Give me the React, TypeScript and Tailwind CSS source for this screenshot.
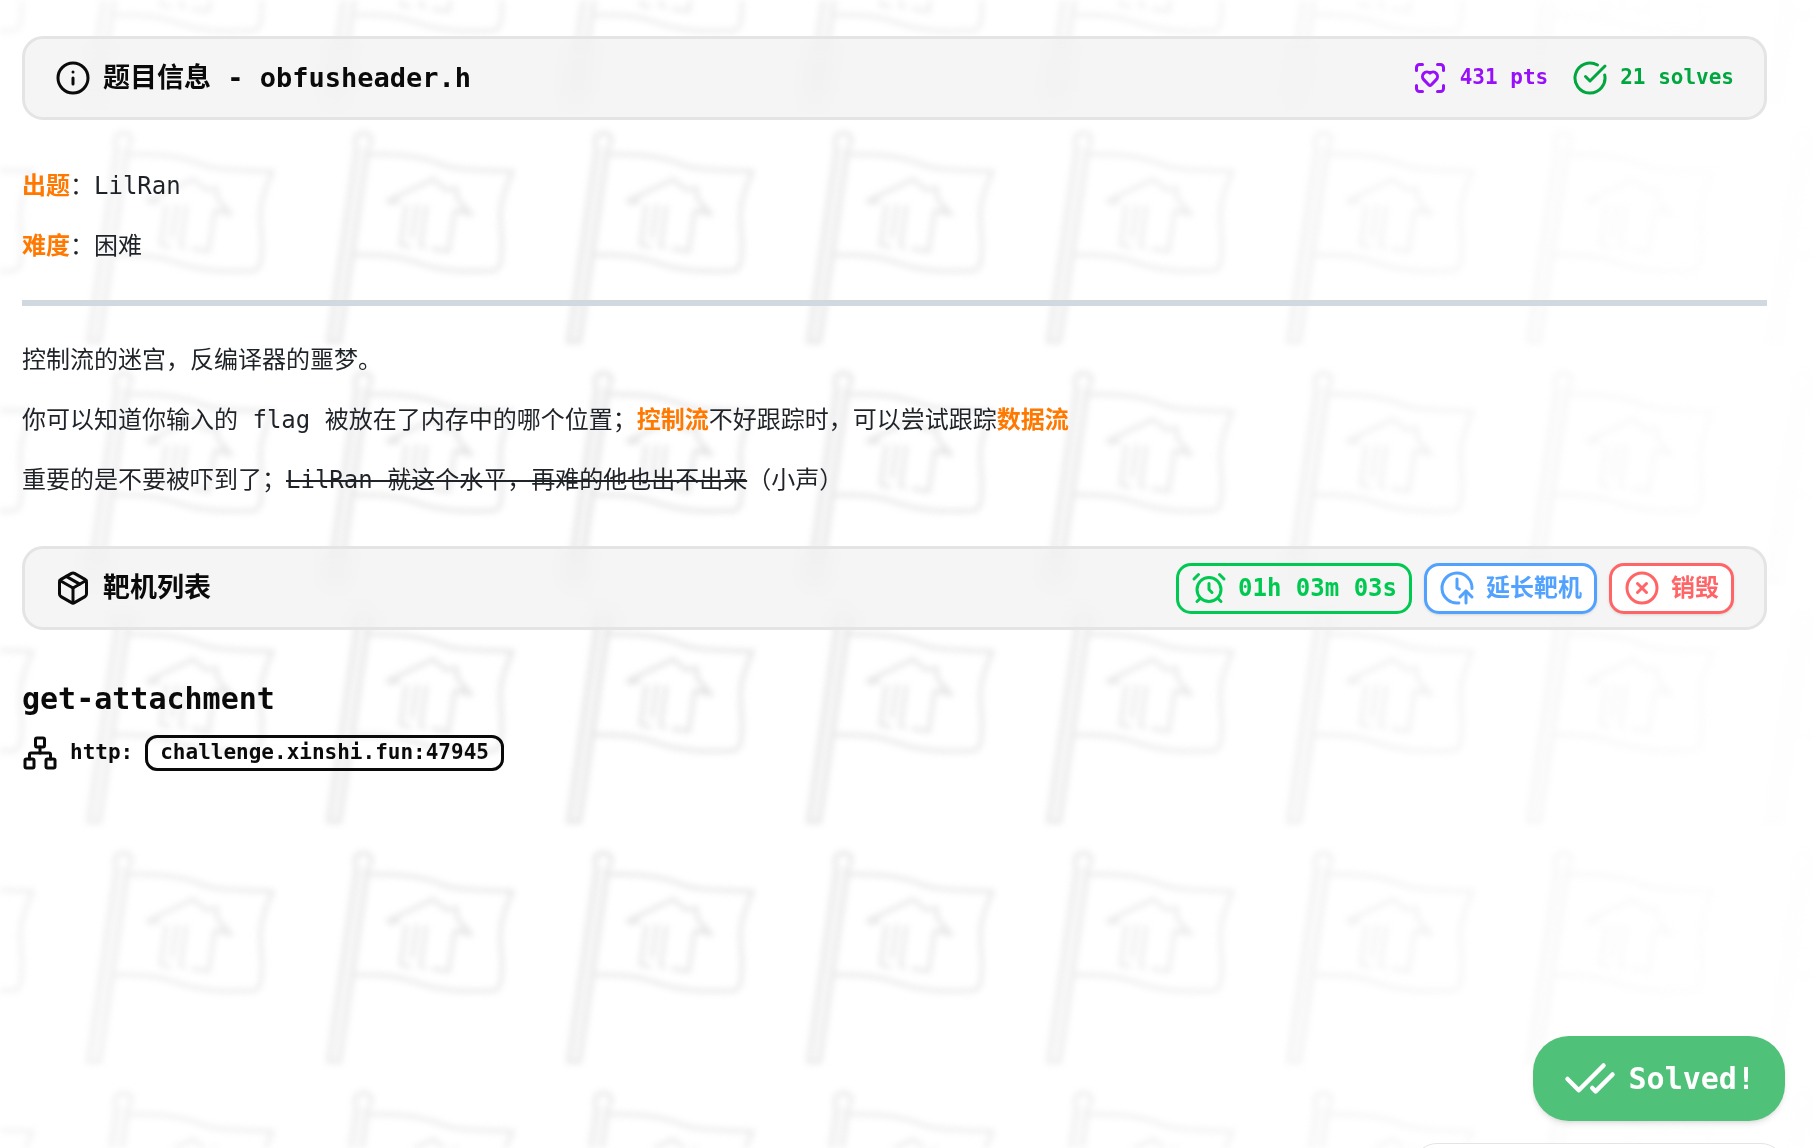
import React from 'react';
import {
  AlarmClock,
  CheckCheck,
  CircleCheckBig,
  CircleX,
  ClockArrowUp,
  Info,
  Network,
  Package,
  ScanHeart,
} from 'lucide-react';

const FlagBackground: React.FC = () => {
  return (
    <svg className="fixed inset-0 -z-10 w-full h-full pointer-events-none" aria-hidden="true">
      <defs>
        <pattern id="flag" x="60" y="110" width="240" height="240" patternUnits="userSpaceOnUse" viewBox="0 0 720 720">
          <g fill="none" stroke="#e4e4e4" strokeWidth="12" strokeLinecap="round" strokeLinejoin="round">
            {/* Pole */}
            <path d="M168 112 C158 84 168 68 190 68 C214 68 222 86 206 112 L120 696 L84 696 Z" fill="#f6f6f6" />
            <circle cx="190" cy="96" r="17" fill="#ffffff" stroke="none" />
            {/* Cloth */}
            <path d="M212 133 C290 130 350 136 410 157 C450 180 520 180 638 184 C590 290 600 310 606 390 C606 440 606 484 576 482 C500 484 430 486 350 458 C290 436 240 434 166 434" />
            {/* House */}
            <path d="M264 272 L400 208 L438 240 L470 234 L472 266 L514 312 L464 302 L446 424 L400 416" />
            <path d="M268 276 L292 274" strokeWidth="16" />
            <path d="M484 300 L510 312" strokeWidth="16" />
            <path d="M318 288 L302 404 L328 410" />
            <path d="M350 288 L336 380" />
            <path d="M378 290 L362 408 L372 412" />
          </g>
        </pattern>
        <radialGradient id="fade" gradientUnits="userSpaceOnUse" cx="640" cy="600" r="1180">
          <stop offset="0" stopColor="#fff" stopOpacity="1" />
          <stop offset="0.4" stopColor="#fff" stopOpacity="0.8" />
          <stop offset="1" stopColor="#fff" stopOpacity="0.05" />
        </radialGradient>
        <mask id="fade-mask">
          <rect width="100%" height="100%" fill="url(#fade)" />
        </mask>
      </defs>
      <g mask="url(#fade-mask)">
        <rect className="blur-[3px]" width="100%" height="100%" fill="url(#flag)" />
      </g>
    </svg>
  );
};

const Panel: React.FC<{ icon: React.ReactNode; title: string; children: React.ReactNode }> = ({
  icon,
  title,
  children,
}) => {
  return (
    <div className="flex items-center justify-between h-[84px] px-[30px] border-[3px] border-[#e4e4e4] rounded-[21px] bg-[#ebebeb]/50 backdrop-blur-md">
      <div className="flex items-center gap-3">
        {icon}
        <h2 className="text-[27px] leading-9 font-bold">{title}</h2>
      </div>
      {children}
    </div>
  );
};

const App: React.FC = () => {
  return (
    <main className="min-h-screen pt-9 pl-[22px] pr-12 text-[#0a0a0a] font-['DejaVu_Sans_Mono','Noto_Sans_CJK_SC',monospace]">
      <FlagBackground />

      <Panel icon={<Info size={36} />} title="题目信息 - obfusheader.h">
        <div className="flex items-center gap-6 text-[21px] font-bold">
          <div className="flex items-center gap-3 text-[#9810fa]">
            <ScanHeart size={36} />
            <span>431 pts</span>
          </div>
          <div className="flex items-center gap-3 text-[#00a63e]">
            <CircleCheckBig size={36} />
            <span>21 solves</span>
          </div>
        </div>
      </Panel>

      {/* Description */}
      <article className="flex flex-col gap-6 py-12 text-2xl leading-9 text-[#1f2328]">
        <p><strong className="text-[#ff7800]">出题</strong>：LilRan</p>
        <p><strong className="text-[#ff7800]">难度</strong>：困难</p>
        <hr className="my-3 h-[6px] border-0 bg-[#d1d9e0]" />
        <p>控制流的迷宫，反编译器的噩梦。</p>
        <p>
          你可以知道你输入的 flag 被放在了内存中的哪个位置；<strong className="text-[#ff7800]">控制流</strong>不好跟踪时，可以尝试跟踪<strong className="text-[#ff7800]">数据流</strong>
        </p>
        <p>重要的是不要被吓到了；<del className="decoration-2">LilRan 就这个水平，再难的他也出不出来</del>（小声）</p>
      </article>

      <Panel icon={<Package size={36} />} title="靶机列表">
        <div className="flex items-center gap-3 text-2xl font-bold">
          <div className="flex items-center gap-[11px] h-[51px] px-3 border-[3px] border-[#00c951] rounded-[15px] text-[#00c951]">
            <AlarmClock size={36} />
            <span>01h 03m 03s</span>
          </div>
          <button className="flex items-center gap-[11px] h-[51px] px-3 border-[3px] border-[#51a2ff] rounded-[15px] bg-white text-[#51a2ff] shadow-sm">
            <ClockArrowUp size={36} />
            延长靶机
          </button>
          <button className="flex items-center gap-[11px] h-[51px] px-3 border-[3px] border-[#ff6467] rounded-[15px] bg-white text-[#ff6467] shadow-sm">
            <CircleX size={36} />
            销毁
          </button>
        </div>
      </Panel>

      {/* Instance */}
      <section className="pt-12 font-bold">
        <h3 className="text-3xl leading-[42px]">get-attachment</h3>
        <div className="flex items-center gap-3 mt-[15px] text-[21px]">
          <Network size={36} />
          <span>http:</span>
          <a href="http://challenge.xinshi.fun:47945" className="flex items-center h-9 px-3 border-[3px] border-[#0a0a0a] rounded-xl">
            challenge.xinshi.fun:47945
          </a>
        </div>
      </section>

      <div className="fixed bottom-0 right-[30px] flex flex-col items-end gap-[22px]">
        <button className="flex items-center gap-3 h-[85px] px-[30px] rounded-[36px] bg-[#4fc179] text-white text-3xl font-bold shadow-md">
          <CheckCheck size={54} />
          Solved!
        </button>
        <div className="w-[372px] h-[60px] -mb-[55px] border border-[#e4e4e4] rounded-[24px] bg-white/80"></div>
      </div>
    </main>
  );
};

export default App;
